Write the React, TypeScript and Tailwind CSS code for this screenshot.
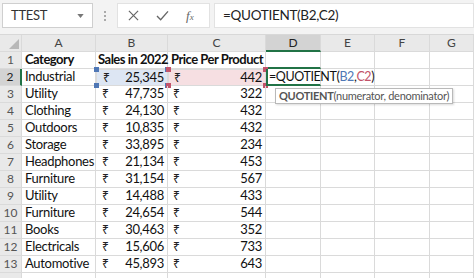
import React from 'react';

const FONT = { fontFamily: 'Lato, "Noto Sans", "DejaVu Sans", sans-serif' };

const rows: [string, string, string][] = [
  ['Industrial', '25,345', '442'],
  ['Utility', '47,735', '322'],
  ['Clothing', '24,130', '432'],
  ['Outdoors', '10,835', '432'],
  ['Storage', '33,895', '234'],
  ['Headphones', '21,134', '453'],
  ['Furniture', '31,154', '567'],
  ['Utility', '14,488', '433'],
  ['Furniture', '24,654', '544'],
  ['Books', '30,463', '352'],
  ['Electricals', '15,606', '733'],
  ['Automotive', '45,893', '643'],
];

const cols = ['A', 'B', 'C', 'D', 'E', 'F', 'G'];
const gridCols = 'grid grid-cols-[22px_74px_72px_98px_55px_54px_55px_1fr]';
const cell = 'h-[17px] border-r border-b border-[#dadada] flex items-center';
const txt = 'text-[13px] tracking-[-0.3px] text-[#111] whitespace-nowrap';
const bold = 'text-[13px] tracking-[-0.5px] font-bold text-[#111] whitespace-nowrap';

function Rupee() {
  return <span className="text-[12px] text-[#222]" style={{ fontFamily: '"Noto Sans", "DejaVu Sans", sans-serif' }}>₹</span>;
}

function Handle({ className }: { className: string }) {
  return <span className={`absolute w-[5px] h-[5px] ${className}`} />;
}

function TopBar() {
  return (
    <div className="h-[35px] bg-[#f3f3f3] border-b border-[#d8d8d8] flex items-start pt-[3px] pl-[2px]">
      <div className="w-[91px] h-[25px] bg-white border border-[#cfcfcf] flex items-center pl-[8px] pr-[8px] justify-between">
        <span className="text-[13px] tracking-[-0.3px] text-[#333]">TTEST</span>
        <svg width="7" height="4" viewBox="0 0 8 5"><path d="M0 0h8L4 5z" fill="#777" /></svg>
      </div>
      <div className="w-[24px] h-[25px] flex flex-col items-center justify-center gap-[2px]">
        <span className="w-[2px] h-[2px] bg-[#aaa]" />
        <span className="w-[2px] h-[2px] bg-[#aaa]" />
        <span className="w-[2px] h-[2px] bg-[#aaa]" />
      </div>
      <div className="w-[93px] h-[25px] bg-white border border-[#e2e2e2] flex items-center pl-[10px] gap-[17px]">
        <svg width="11" height="11" viewBox="0 0 12 12"><path d="M1 1l10 10M11 1L1 11" stroke="#666" strokeWidth="1.3" /></svg>
        <svg width="13" height="11" viewBox="0 0 14 12"><path d="M1 6.5l4 4L13 1.5" stroke="#666" strokeWidth="1.5" fill="none" /></svg>
        <span className="text-[13px] italic text-[#666]" style={{ fontFamily: '"Liberation Serif", serif' }}>f<span className="text-[9px]">x</span></span>
      </div>
      <div className="flex-1 ml-[4px] h-[25px] bg-white border border-[#e2e2e2] flex items-center pl-[8px]">
        <span className="text-[13.5px] tracking-[-0.3px] text-[#222]">=QUOTIENT(B2,C2)</span>
      </div>
    </div>
  );
}

export default function App() {
  return (
    <div className="w-[474px] h-[278px] overflow-hidden bg-white relative" style={FONT}>
      <TopBar />
      <div className={gridCols}>
        <div className={`${cell} bg-[#e9e9e9] justify-end items-end pr-[2px] pb-[2px]`}>
          <svg width="10" height="10" viewBox="0 0 10 10"><path d="M10 0v10H0z" fill="#b8b8b8" /></svg>
        </div>
        {cols.map(c => (
          <div
            key={c}
            className={`${cell} justify-center text-[12px] ${c === 'D' ? 'bg-[#d3d3d3] text-[#222] border-b-2 border-b-[#217346]' : 'bg-[#e9e9e9] text-[#444]'}`}
          >
            {c}
          </div>
        ))}

        <div className={`${cell} bg-[#e9e9e9] justify-center text-[12px] text-[#555]`}>1</div>
        <div className={`${cell} pl-[3px] ${bold}`}>Category</div>
        <div className={`${cell} pl-[2px] ${bold}`}>Sales in 2022</div>
        <div className={`${cell} pl-[3px] ${bold}`}>Price Per Product</div>
        <div className={`${cell} border-b-2 border-b-[#217346]`} />
        <div className={cell} />
        <div className={cell} />
        <div className={cell} />

        {rows.map(([cat, sales, price], i) => {
          const n = i + 2;
          const sel = n === 2;
          return (
            <React.Fragment key={n}>
              <div className={`${cell} justify-center text-[12px] ${sel ? 'bg-[#d3d3d3] text-[#222] border-r-2 border-r-[#217346]' : 'bg-[#e9e9e9] text-[#555]'}`}>{n}</div>
              <div className={`${cell} pl-[3px] ${txt}`}>{cat}</div>
              <div className={`${cell} justify-between pl-[6px] pr-[3px] ${txt} relative ${sel ? 'bg-[#dde6f3] border-[1.5px] border-[#4f77b5]' : ''}`}>
                <Rupee />
                <span>{sales}</span>
                {sel && (
                  <>
                    <Handle className="bg-[#4f77b5] -left-[3px] -top-[3px]" />
                    <Handle className="bg-[#4f77b5] -right-[3px] -top-[3px]" />
                    <Handle className="bg-[#4f77b5] -left-[3px] -bottom-[3px]" />
                    <Handle className="bg-[#4f77b5] -right-[3px] -bottom-[3px]" />
                  </>
                )}
              </div>
              <div className={`${cell} justify-between pl-[5px] pr-[3px] ${txt} relative ${sel ? 'bg-[#f6dfe2] border-[1.5px] border-[#c2536a]' : ''}`}>
                <Rupee />
                <span>{price}</span>
                {sel && (
                  <>
                    <Handle className="bg-[#c2536a] -left-[3px] -top-[3px]" />
                    <Handle className="bg-[#c2536a] -right-[3px] -top-[3px]" />
                    <Handle className="bg-[#c2536a] -left-[3px] -bottom-[3px]" />
                    <Handle className="bg-[#c2536a] -right-[3px] -bottom-[3px]" />
                  </>
                )}
              </div>
              <div className={`${cell} relative ${sel ? 'border-l-2 border-l-[#217346] border-b-2 border-b-[#217346]' : ''}`}>
                {sel && (
                  <span className="absolute left-[1px] top-0 h-[17px] flex items-center text-[12.5px] tracking-[-0.4px] text-[#111] whitespace-nowrap z-10">
                    =QUOTIENT(<span className="text-[#4f77b5]">B2</span>,<span className="text-[#c2536a]">C2</span>)
                  </span>
                )}
              </div>
              <div className={cell} />
              <div className={cell} />
              <div className={cell} />
            </React.Fragment>
          );
        })}
        <div className={`${cell} bg-[#e9e9e9]`} />
        {cols.map(c => <div key={c} className={cell} />)}
      </div>
      <div className="absolute left-[275px] top-[88px] h-[16px] px-[3px] bg-white border border-[#b9b9b9] shadow-[1px_1px_2px_rgba(0,0,0,0.15)] flex items-center text-[11px] tracking-[-0.3px] text-[#555] whitespace-nowrap">
        <span className="font-bold">QUOTIENT</span>(numerator, denominator)
      </div>
    </div>
  );
}
